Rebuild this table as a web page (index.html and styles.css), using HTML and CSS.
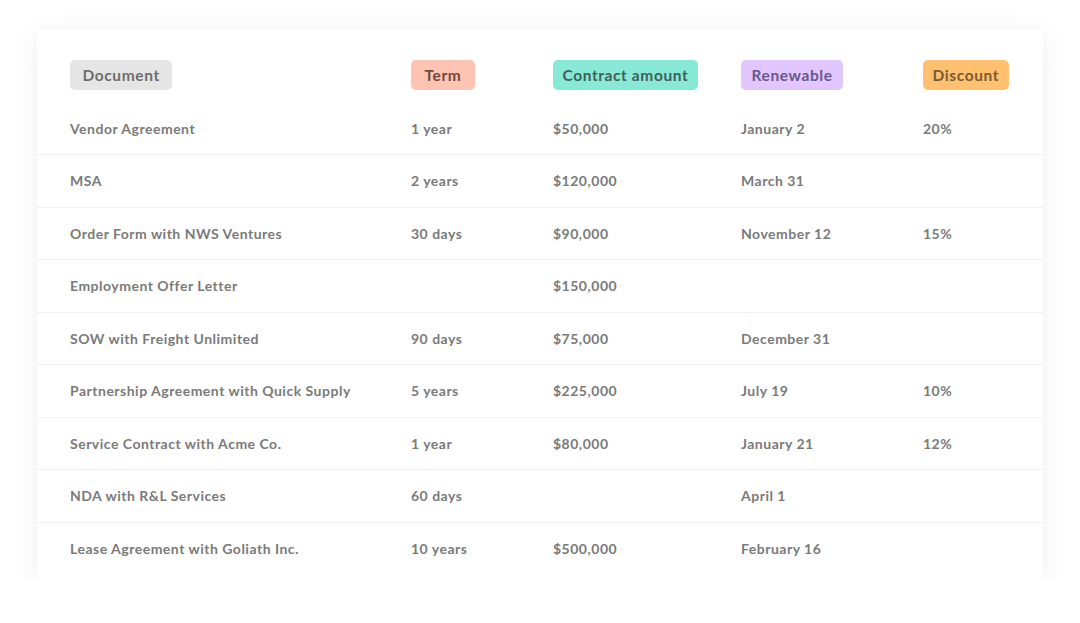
FILE: index.html
```html
<!DOCTYPE html>
<html lang="en">
<head>
    <meta charset="UTF-8">
    <meta name="viewport" content="width=device-width, initial-scale=1.0">
    <title>Contracts</title>
    <link rel="stylesheet" href="styles.css">
</head>
<body>
    <div class="card">
        <div class="row head">
            <div class="cell"><span class="pill doc">Document</span></div>
            <div class="cell"><span class="pill term">Term</span></div>
            <div class="cell"><span class="pill amount">Contract amount</span></div>
            <div class="cell"><span class="pill renew">Renewable</span></div>
            <div class="cell"><span class="pill discount">Discount</span></div>
        </div>
        <div class="row">
            <div class="cell">Vendor Agreement</div>
            <div class="cell">1 year</div>
            <div class="cell">$50,000</div>
            <div class="cell">January 2</div>
            <div class="cell">20%</div>
        </div>
        <div class="row">
            <div class="cell">MSA</div>
            <div class="cell">2 years</div>
            <div class="cell">$120,000</div>
            <div class="cell">March 31</div>
            <div class="cell"></div>
        </div>
        <div class="row">
            <div class="cell">Order Form with NWS Ventures</div>
            <div class="cell">30 days</div>
            <div class="cell">$90,000</div>
            <div class="cell">November 12</div>
            <div class="cell">15%</div>
        </div>
        <div class="row">
            <div class="cell">Employment Offer Letter</div>
            <div class="cell"></div>
            <div class="cell">$150,000</div>
            <div class="cell"></div>
            <div class="cell"></div>
        </div>
        <div class="row">
            <div class="cell">SOW with Freight Unlimited</div>
            <div class="cell">90 days</div>
            <div class="cell">$75,000</div>
            <div class="cell">December 31</div>
            <div class="cell"></div>
        </div>
        <div class="row">
            <div class="cell">Partnership Agreement with Quick Supply</div>
            <div class="cell">5 years</div>
            <div class="cell">$225,000</div>
            <div class="cell">July 19</div>
            <div class="cell">10%</div>
        </div>
        <div class="row">
            <div class="cell">Service Contract with Acme Co.</div>
            <div class="cell">1 year</div>
            <div class="cell">$80,000</div>
            <div class="cell">January 21</div>
            <div class="cell">12%</div>
        </div>
        <div class="row">
            <div class="cell">NDA with R&amp;L Services</div>
            <div class="cell">60 days</div>
            <div class="cell"></div>
            <div class="cell">April 1</div>
            <div class="cell"></div>
        </div>
        <div class="row last">
            <div class="cell">Lease Agreement with Goliath Inc.</div>
            <div class="cell">10 years</div>
            <div class="cell">$500,000</div>
            <div class="cell">February 16</div>
            <div class="cell"></div>
        </div>
    </div>
</body>
</html>
```

FILE: styles.css
```css
body {
    margin: 0;
    background-color: #ffffff;
    font-family: Lato, "Open Sans", Arial, sans-serif;
    color: #7a7a7a;
    padding: 29px 37px 0 37px;
}
.card {
    width: 1006px;
    background-color: white;
    border-radius: 7px;
    box-shadow: 0 6px 34px rgba(0, 0, 0, 0.06), 0 0 10px rgba(0, 0, 0, 0.025);
    padding-bottom: 4px;
}
.row {
    display: grid;
    grid-template-columns: 341px 142px 188px 182px 1fr;
    height: 52.5px;
    box-sizing: border-box;
    align-items: center;
    padding-left: 33px;
    border-top: 1px solid #f0f0f0;
    font-size: 14px;
    font-weight: 700;
    letter-spacing: 0.5px;
}
.row.head {
    border-top: none;
    height: 73px;
    align-items: start;
    padding-top: 31px;
}
.row:nth-child(2) {
    border-top: none;
    height: 52px;
}
.row.last {
    height: 53px;
}
.cell {
    white-space: nowrap;
}
.pill {
    display: inline-block;
    height: 30px;
    line-height: 30px;
    padding: 0 11px;
    border-radius: 5px;
    font-size: 15.5px;
    font-weight: 700;
    letter-spacing: 0.6px;
}
.pill.doc {
    background-color: #e5e5e5;
    color: #6e6e6e;
    padding: 0 12.5px;
}
.pill.term {
    background-color: #ffc3b4;
    color: #6e4a40;
    padding: 0 13.5px;
}
.pill.amount {
    background-color: #88e9d6;
    color: #3f5f59;
    padding: 0 9.5px;
}
.pill.renew {
    background-color: #e2c6ff;
    color: #6a5888;
    padding: 0 10.5px;
}
.pill.discount {
    background-color: #ffc170;
    color: #7a5a33;
    padding: 0 9.5px;
}
```
